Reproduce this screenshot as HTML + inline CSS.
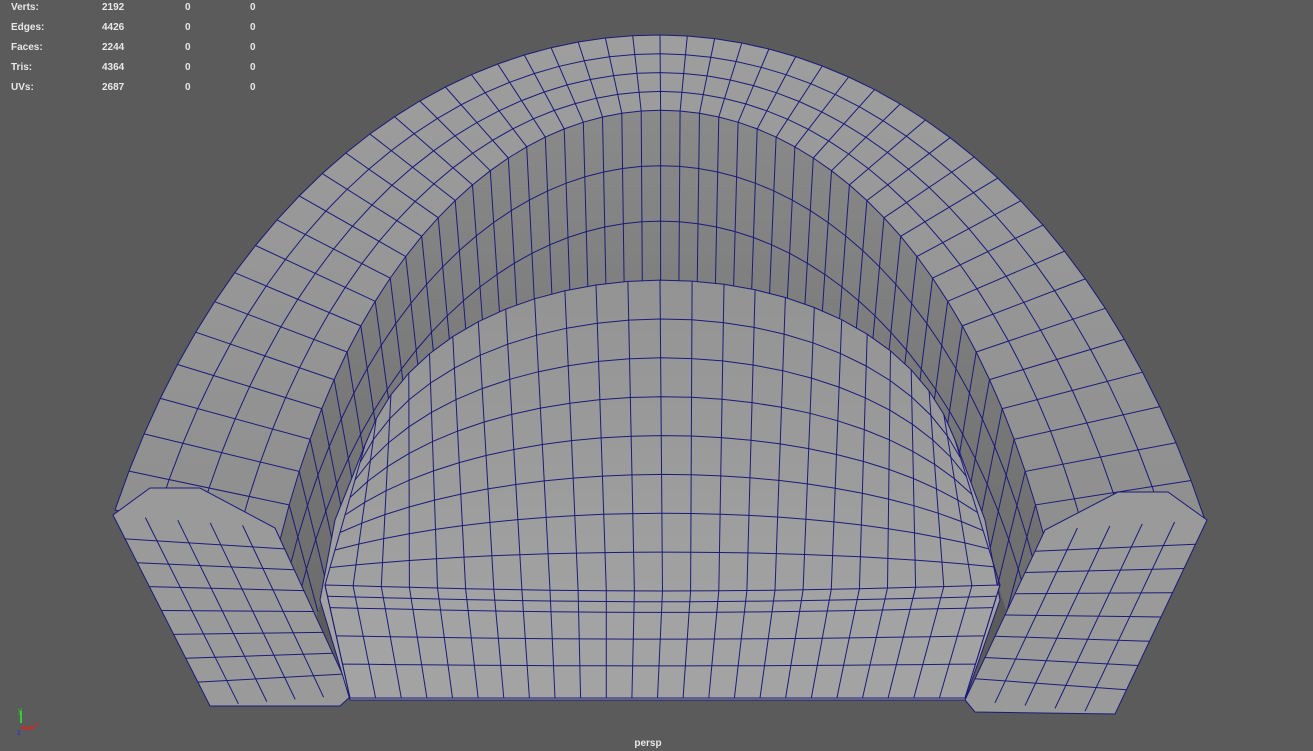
<!DOCTYPE html><html><head><style>
html,body{margin:0;padding:0;background:#5b5b5b;width:1313px;height:751px;overflow:hidden;font-family:"Liberation Sans",sans-serif}
.st{position:absolute;left:11px;color:#e8e8e8;font-size:10px;font-weight:bold}
.st span{position:absolute;white-space:nowrap}
</style></head><body>
<svg id="s" width="1313" height="751" style="position:absolute;left:0;top:0">
<defs>
<linearGradient id="gb" x1="0" y1="0" x2="0" y2="1"><stop offset="0" stop-color="#8a8a8a"/><stop offset="1" stop-color="#6a6a6a"/></linearGradient>
<linearGradient id="gs" x1="0" y1="0" x2="0" y2="1"><stop offset="0" stop-color="#939393"/><stop offset="1" stop-color="#a6a6a6"/></linearGradient>
<linearGradient id="gr" x1="0" y1="0" x2="0" y2="1"><stop offset="0" stop-color="#9e9e9e"/><stop offset="1" stop-color="#8e8e8e"/></linearGradient>
</defs>
<g id="g"></g>
<text x="648" y="746" fill="#e8e8e8" font-size="10" font-weight="bold" text-anchor="middle" font-family="Liberation Sans">persp</text>
<line x1="21" y1="723" x2="21" y2="711" stroke="#2fd02f" stroke-width="2"/>
<line x1="21" y1="728" x2="34" y2="728" stroke="#e02020" stroke-width="2"/>
<text x="18" y="713" fill="#2fd02f" font-size="8" font-family="Liberation Sans">y</text>
<text x="34" y="727" fill="#e02020" font-size="8" font-family="Liberation Sans">x</text>
<text x="17" y="735" fill="#3030e0" font-size="8" font-family="Liberation Sans">z</text>
</svg>
<div class="st">
<span style="top:2px">Verts:</span><span style="top:2px;left:91px">2192</span><span style="top:2px;left:174px">0</span><span style="top:2px;left:239px">0</span>
<span style="top:22px">Edges:</span><span style="top:22px;left:91px">4426</span><span style="top:22px;left:174px">0</span><span style="top:22px;left:239px">0</span>
<span style="top:42px">Faces:</span><span style="top:42px;left:91px">2244</span><span style="top:42px;left:174px">0</span><span style="top:42px;left:239px">0</span>
<span style="top:62px">Tris:</span><span style="top:62px;left:91px">4364</span><span style="top:62px;left:174px">0</span><span style="top:62px;left:239px">0</span>
<span style="top:82px">UVs:</span><span style="top:82px;left:91px">2687</span><span style="top:82px;left:174px">0</span><span style="top:82px;left:239px">0</span>
</div>
<script>
(function(){
var g=document.getElementById('g'),NS='http://www.w3.org/2000/svg';
function bz(p,t){var u=1-t;return[u*u*u*p[0][0]+3*u*u*t*p[1][0]+3*u*t*t*p[2][0]+t*t*t*p[3][0],u*u*u*p[0][1]+3*u*u*t*p[1][1]+3*u*t*t*p[2][1]+t*t*t*p[3][1]];}
function L(a,b,s){return[a[0]+(b[0]-a[0])*s,a[1]+(b[1]-a[1])*s];}
function el(tag,at){var e=document.createElementNS(NS,tag);for(var k in at)e.setAttribute(k,at[k]);g.appendChild(e);return e;}
function pts(a){return a.map(function(p){return p[0].toFixed(1)+','+p[1].toFixed(1)}).join(' ');}
function ext(a,b){var c={};for(var k in a)c[k]=a[k];for(k in b)c[k]=b[k];return c;}
var O=[[115,510],[330,-125],[990,-125],[1205,520]];
var R=[[280,540],[420,-33],[900,-33],[1045,540]];
var B=[[310,640],[430,180],[890,180],[1015,640]];
var N=48,i,j,o=[],r=[],b=[];
for(i=0;i<=N;i++){o.push(bz(O,i/N));r.push(bz(R,i/N));b.push(bz(B,i/N));}
var ln={fill:'none',stroke:'#1c1a78','stroke-width':1};
var la=[[113,515],[150,488],[200,488],[275,528],[352,695],[340,706],[210,706]];
var ra=[[1207,520],[1168,492],[1118,492],[1045,530],[965,700],[975,712],[1115,714]];
el('polygon',{points:pts(o.concat(r.slice().reverse())),fill:'url(#gr)'});
el('polygon',{points:pts(r.concat(b.slice().reverse())),fill:'url(#gb)'});
for(i=0;i<=N;i++)el('polyline',ext(ln,{points:pts([o[i],r[i],b[i]])}));
[0,.25,.5,.75,1].forEach(function(s){var a=[];for(var i=0;i<=N;i++)a.push(L(o[i],r[i],s));el('polyline',ext(ln,{points:pts(a)}));});
[.3,.6].forEach(function(s){var a=[];for(var i=0;i<=N;i++)a.push(L(r[i],b[i],s));el('polyline',ext(ln,{points:pts(a)}));});
el('polygon',{points:pts(la),fill:'#9a9a9a',stroke:'#1c1a78'});
el('polygon',{points:pts(ra),fill:'#9a9a9a',stroke:'#1c1a78'});
function armgrid(q){var tl=q[0],tr=q[3],bl=q[6],br=q[4],k,s;for(k=1;k<8;k++){s=k/8;var p1=L(tl,bl,s),p2=L(tr,br,s);el('line',ext(ln,{x1:p1[0],y1:p1[1],x2:p2[0],y2:p2[1]}));}
for(k=1;k<5;k++){s=k/5;var a=L(tl,tr,s),c=L(bl,br,s);el('line',ext(ln,{x1:a[0],y1:a[1],x2:c[0],y2:c[1]}));}}
armgrid(la);armgrid(ra);
var T=[[365,445],[440,226],[880,226],[955,440]];
var M=24,tp=[],fr=[],bt=[];
for(i=0;i<=M;i++){var u=i/M;tp.push(bz(T,u));fr.push([325+675*u,585+Math.sin(u*Math.PI)*6]);bt.push([350+615*u,698]);}
var sp=[[320,600],[335,520]].concat(tp).concat([[985,520],[1000,600],[965,700],[350,700]]);
el('polygon',{points:pts(sp),fill:'url(#gs)',stroke:'#1c1a78'});
el('polygon',{points:pts(fr.concat(bt.slice().reverse())),fill:'#a3a3a3',stroke:'#1c1a78'});
for(i=0;i<=M;i++)el('polyline',ext(ln,{points:pts([tp[i],fr[i],bt[i]])}));
for(j=1;j<8;j++){var s=j/8,a=[];for(i=0;i<=M;i++)a.push(L(tp[i],fr[i],s));el('polyline',ext(ln,{points:pts(a)}));}
[.1,.2,.45,.7].forEach(function(s){var a=[];for(var i=0;i<=M;i++)a.push(L(fr[i],bt[i],s));el('polyline',ext(ln,{points:pts(a)}));});
})();
</script>
</body></html>
